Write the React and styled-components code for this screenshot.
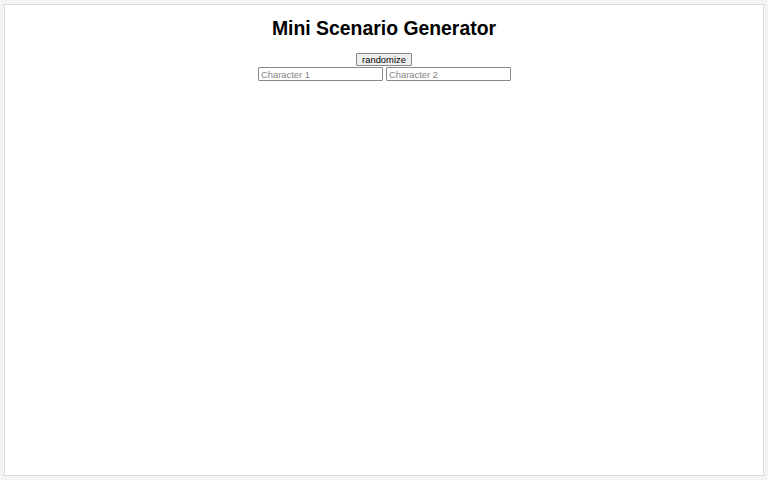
import React, { useState } from "react";
import styled, { createGlobalStyle } from "styled-components";

const Global = createGlobalStyle`
  html, body { margin: 0; padding: 0; background: #f4f4f4; }
  body { font-family: "Liberation Sans", Arial, sans-serif; }
`;

const Page = styled.div`
  box-sizing: border-box;
  height: 480px;
  padding: 4px;
`;

const Panel = styled.main`
  box-sizing: border-box;
  height: 472px;
  background: #ffffff;
  border: 1px solid #dcdcdc;
  text-align: center;
  padding-top: 12px;
`;

const Title = styled.h1`
  margin: 0 0 14px;
  font-size: 19.4px;
  line-height: 22px;
  font-weight: bold;
  color: #000;
`;

const Controls = styled.div`
  display: flex;
  flex-direction: column;
  align-items: center;
  gap: 1px;
`;

const Button = styled.button`
  box-sizing: border-box;
  font-family: "Liberation Sans", Arial, sans-serif;
  font-size: 9.4px;
  padding: 0 5px;
  height: 13px;
  line-height: 11px;
  border: 1px solid #8a8a8a;
  border-radius: 1px;
  background: #efefef;
  color: #000;
`;

const Row = styled.div`
  display: flex;
  gap: 3px;
  padding-left: 1px;
`;

const Input = styled.input`
  box-sizing: border-box;
  width: 125px;
  height: 14px;
  padding: 0 2px;
  font-family: "Liberation Sans", Arial, sans-serif;
  font-size: 9.4px;
  border: 1px solid #8a8a8a;
  border-radius: 1px;
  background: #fff;
  &::placeholder { color: #858585; }
`;

export default function App() {
  const [a, setA] = useState("");
  const [b, setB] = useState("");
  return (
    <>
      <Global />
      <Page>
        <Panel>
          <Title>Mini Scenario Generator</Title>
          <Controls>
            <Button type="button">randomize</Button>
            <Row>
              <Input placeholder="Character 1" value={a} onChange={(e) => setA(e.target.value)} />
              <Input placeholder="Character 2" value={b} onChange={(e) => setB(e.target.value)} />
            </Row>
          </Controls>
        </Panel>
      </Page>
    </>
  );
}
